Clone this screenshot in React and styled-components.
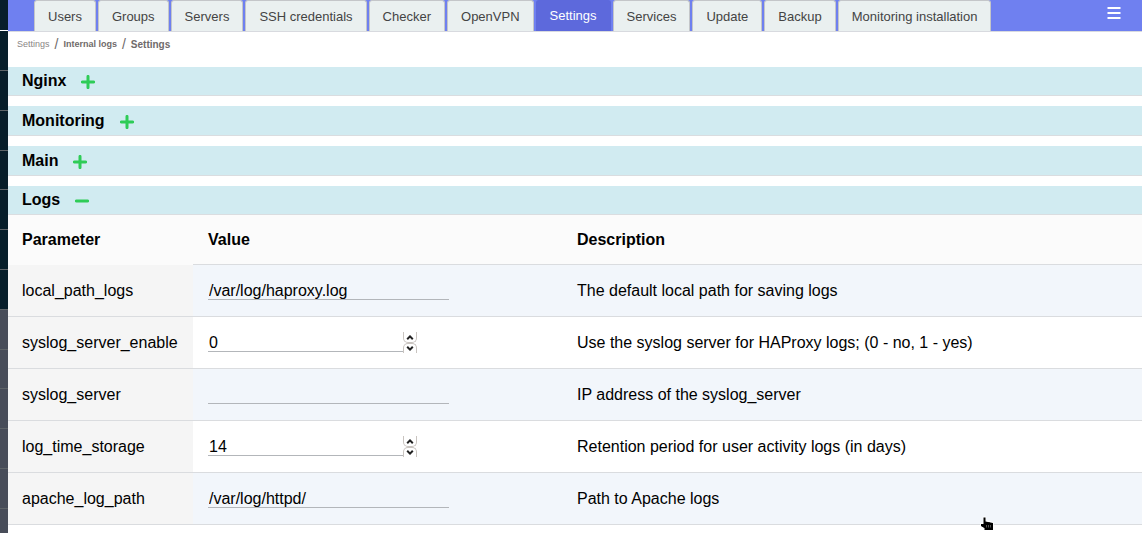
import { useState } from "react";
import styled, { createGlobalStyle } from "styled-components";

const tabs = [
  "Users",
  "Groups",
  "Servers",
  "SSH credentials",
  "Checker",
  "OpenVPN",
  "Settings",
  "Services",
  "Update",
  "Backup",
  "Monitoring installation",
];

const closedSections = ["Nginx", "Monitoring", "Main"];

const params = [
  {
    name: "local_path_logs",
    value: "/var/log/haproxy.log",
    description: "The default local path for saving logs",
  },
  {
    name: "syslog_server_enable",
    value: "0",
    number: true,
    description: "Use the syslog server for HAProxy logs; (0 - no, 1 - yes)",
  },
  {
    name: "syslog_server",
    value: "",
    description: "IP address of the syslog_server",
  },
  {
    name: "log_time_storage",
    value: "14",
    number: true,
    description: "Retention period for user activity logs (in days)",
  },
  {
    name: "apache_log_path",
    value: "/var/log/httpd/",
    description: "Path to Apache logs",
  },
];

const menuItems = Array.from({ length: 14 }, (_, i) => i);

function SectionHeading({ title, open }) {
  return (
    <Heading $open={open}>
      <h3>{title}</h3>
      <Toggle aria-label={open ? `Hide ${title}` : `Show ${title}`}>
        <svg width="14" height="14" viewBox="0 0 14 14">
          <path
            d={open ? "M1.4 7H12.6" : "M1.4 7H12.6M7 1.4V12.6"}
            stroke="#2ecc57"
            strokeWidth="3"
            strokeLinecap="round"
          />
        </svg>
      </Toggle>
    </Heading>
  );
}

function NumberField({ id, initial }) {
  const [value, setValue] = useState(initial);
  const step = (by) => setValue(String(Number(value) + by));

  return (
    <NumberBox>
      <Input
        id={id}
        type="number"
        value={value}
        onChange={(e) => setValue(e.target.value)}
      />
      <Spinner>
        <StepUp type="button" aria-label="Increase" onClick={() => step(1)}>
          <svg width="8" height="5" viewBox="0 0 8 5">
            <path d="M1.2 4.2L4 1.4L6.8 4.2" />
          </svg>
        </StepUp>
        <StepDown type="button" aria-label="Decrease" onClick={() => step(-1)}>
          <svg width="8" height="5" viewBox="0 0 8 5">
            <path d="M1.2 0.8L4 3.6L6.8 0.8" />
          </svg>
        </StepDown>
      </Spinner>
    </NumberBox>
  );
}

function App() {
  return (
    <Page>
      <GlobalStyle />
      <Sidebar>
        {menuItems.map((i) => (
          <MenuItem key={i} $sub={i > 7} />
        ))}
      </Sidebar>
      <Main>
        <TopBar>
          <Tabs>
            {tabs.map((tab) => (
              <Tab key={tab} href="#" $active={tab === "Settings"}>
                {tab}
              </Tab>
            ))}
          </Tabs>
          <MenuButton aria-label="Menu">
            <svg width="14" height="14" viewBox="0 0 14 14">
              <path
                d="M0.5 2H13.5M0.5 7H13.5M0.5 12H13.5"
                stroke="#fff"
                strokeWidth="2"
              />
            </svg>
          </MenuButton>
        </TopBar>
        <Breadcrumbs>
          <a href="#">Settings</a>
          <span>/</span>
          <b>Internal logs</b>
          <span>/</span>
          <Current>Settings</Current>
        </Breadcrumbs>
        <Sections>
          {closedSections.map((title) => (
            <SectionHeading key={title} title={title} />
          ))}
          <SectionHeading title="Logs" open />
        </Sections>
        <Table>
          <thead>
            <tr>
              <th>Parameter</th>
              <th>Value</th>
              <th>Description</th>
            </tr>
          </thead>
          <tbody>
            {params.map(({ name, value, number, description }) => (
              <tr key={name}>
                <td>
                  <label htmlFor={name}>{name}</label>
                </td>
                <td>
                  {number ? (
                    <NumberField id={name} initial={value} />
                  ) : (
                    <Input id={name} type="text" defaultValue={value} />
                  )}
                </td>
                <td>{description}</td>
              </tr>
            ))}
          </tbody>
        </Table>
      </Main>
      <Pointer width="16" height="16" viewBox="0 0 16 16">
        <path
          d="M4.5 1.2H6.5V5.2H9V5.8H11.5V6.6H14V14.5H5.5V12.5L2 10.5V7.5H4.5Z"
          fill="#000"
          stroke="#fff"
          strokeWidth="1.4"
          strokeLinejoin="round"
        />
        <path d="M4.5 1.5H6.5V5.5L14 7V14H5.5V12L2 10V8H4.5Z" fill="#000" />
        <path
          d="M7.5 9V11.5M9.5 9V11.5M11.5 9V11.5"
          stroke="#777"
          strokeWidth="0.7"
        />
      </Pointer>
    </Page>
  );
}

const GlobalStyle = createGlobalStyle`
  * {
    box-sizing: border-box;
  }
  body {
    margin: 0;
    background: #fff;
    color: #000;
    font-family: "Liberation Sans", Arial, sans-serif;
    font-size: 16px;
    overflow: hidden;
  }
  button {
    padding: 0;
    border: 0;
    background: none;
    cursor: pointer;
  }
  svg {
    display: block;
    fill: none;
  }
`;

const Page = styled.div`
  display: flex;
  position: relative;
  height: 100vh;
  overflow: hidden;
`;

const Sidebar = styled.aside`
  flex: 0 0 8px;
  background: #484d59;
`;

const MenuItem = styled.div`
  height: 40px;
  background: ${({ $sub }) => ($sub ? "#484d59" : "#071e2a")};
  border-bottom: 1px solid #5f6468;

  &:first-child {
    height: 31px;
    border-color: #fff;
  }
  &:nth-child(5n) {
    height: 39px;
  }
`;

const Main = styled.main`
  flex: 1;
  min-width: 0;
`;

const TopBar = styled.header`
  display: flex;
  justify-content: space-between;
  height: 32px;
  padding: 0 21px 0 26px;
  background: #6f80f0;
  border-bottom: 1px solid #d8dadf;
`;

const Tabs = styled.nav`
  display: flex;
  gap: 2px;
`;

const Tab = styled.a`
  padding: ${({ $active }) => ($active ? "0 13px" : "1px 13px 0")};
  border: 1px solid ${({ $active }) => ($active ? "#5d69dc" : "#c4c6c9")};
  border-bottom: 0;
  border-radius: 3px 3px 0 0;
  background: ${({ $active }) => ($active ? "#5d69dc" : "#eaf0f0")};
  color: ${({ $active }) => ($active ? "#fff" : "#444")};
  font-size: 13px;
  line-height: 30px;
  text-decoration: none;
  white-space: nowrap;
`;

const MenuButton = styled.button`
  align-self: flex-start;
  margin-top: 6px;
`;

const Breadcrumbs = styled.nav`
  display: flex;
  align-items: center;
  gap: 5px;
  height: 35px;
  padding: 0 9px 11px;
  color: #6f6a6a;
  font-size: 9px;

  a {
    color: #8a8686;
    text-decoration: none;
  }
  span {
    font-size: 14px;
  }
`;

const Current = styled.b`
  font-size: 10px;
`;

const Sections = styled.div`
  display: flex;
  flex-direction: column;
  gap: 10px;
`;

const Heading = styled.div`
  display: flex;
  align-items: center;
  gap: 15px;
  height: ${({ $open }) => ($open ? "29px" : "30px")};
  padding: 0 14px;
  background: #d1ebf1;
  border-bottom: 1px solid #dadde0;

  &:first-child {
    height: 29px;
  }
  h3 {
    margin: 0;
    font-size: 16px;
    line-height: 18px;
  }
`;

const Toggle = styled.button`
  padding-top: 2px;
`;

const Table = styled.table`
  width: 100%;
  table-layout: fixed;
  border-collapse: separate;
  border-spacing: 0;

  th,
  td {
    height: 52px;
    padding: 0 15px;
    border-bottom: 1px solid #dadcdf;
    text-align: left;
  }
  th {
    height: 50px;
    background: #fbfbfb;
  }
  th:first-child {
    width: 185px;
    border-bottom: 0;
  }
  th:nth-child(2) {
    width: 369px;
  }
  th:first-child,
  td:first-child {
    padding: 0 14px;
  }
  tbody tr:nth-child(odd) {
    background: #f2f6fb;
  }
  td:first-child {
    background: #f5f5f5;
  }
`;

const Input = styled.input`
  display: block;
  width: 241px;
  height: 19px;
  padding: 2px 1px 0;
  border: 0;
  border-bottom: 1px solid #b3b6ba;
  outline: 0;
  background: transparent;
  color: #000;
  font: inherit;
`;

const NumberBox = styled.div`
  display: flex;
  align-items: center;

  input {
    width: 195px;
    appearance: textfield;
  }
`;

const Spinner = styled.div`
  display: flex;
  flex-direction: column;
  width: 14px;
`;

const Step = styled.button`
  display: flex;
  align-items: center;
  justify-content: center;
  border: 1px solid #c9c4c0;

  svg {
    stroke: #222;
    stroke-width: 2;
  }
`;

const StepUp = styled(Step)`
  height: 11px;
  border-top: 0;
  border-radius: 0 0 5px 5px;
`;

const StepDown = styled(Step)`
  height: 10px;
  border-bottom: 0;
  border-radius: 5px 5px 0 0;
`;

const Pointer = styled.svg`
  position: absolute;
  top: 516px;
  left: 979px;
  pointer-events: none;
`;

export default App;
